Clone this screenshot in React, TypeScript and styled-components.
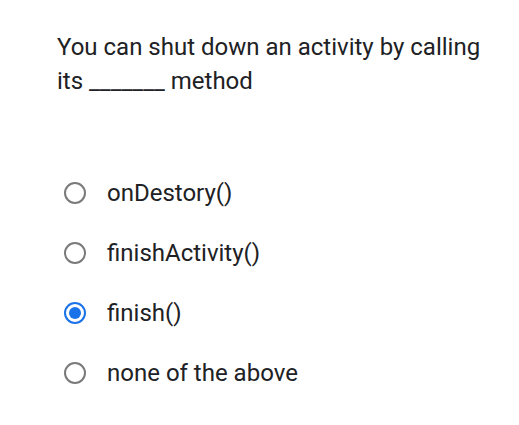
import styled, { createGlobalStyle } from 'styled-components';

const GlobalStyle = createGlobalStyle`
    html, body {
        margin: 0;
        padding: 0;
        background: #ffffff;
    }
    body {
        font-family: Roboto, "Noto Sans", Arial, sans-serif;
    }
`;

const Card = styled.div`
    width: 519px;
    height: 425px;
    padding: 30px 0 0 57px;
    box-sizing: border-box;
    color: #202124;
`;

const Question = styled.p`
    margin: 0;
    width: 440px;
    font-size: 24px;
    line-height: 34px;
    font-weight: 400;
`;

const Options = styled.div`
    display: flex;
    flex-direction: column;
    margin-top: 65px;
`;

const Option = styled.label`
    display: flex;
    flex-direction: row;
    align-items: center;
    height: 60px;
    gap: 21px;
    cursor: pointer;
`;

const Radio = styled.span<{ $checked?: boolean }>`
    width: 22px;
    height: 22px;
    margin-left: 7px;
    border-radius: 50%;
    box-sizing: border-box;
    border: 2px solid ${({ $checked }) => ($checked ? '#1a73e8' : '#7a7a7a')};
    display: flex;
    align-items: center;
    justify-content: center;

    &::after {
        content: '';
        width: 12px;
        height: 12px;
        border-radius: 50%;
        background: #1a73e8;
        display: ${({ $checked }) => ($checked ? 'block' : 'none')};
    }
`;

const OptionText = styled.span`
    font-size: 24px;
    line-height: 28px;
    color: #202124;
`;

const options = ['onDestory()', 'finishActivity()', 'finish()', 'none of the above'];

export default function App() {
    const selected = 2;

    return (
        <>
            <GlobalStyle />
            <Card>
                <Question>
                    You can shut down an activity by calling its _______ method
                </Question>
                <Options>
                    {options.map((text, i) => (
                        <Option key={text}>
                            <Radio $checked={i === selected} />
                            <OptionText>{text}</OptionText>
                        </Option>
                    ))}
                </Options>
            </Card>
        </>
    );
}
